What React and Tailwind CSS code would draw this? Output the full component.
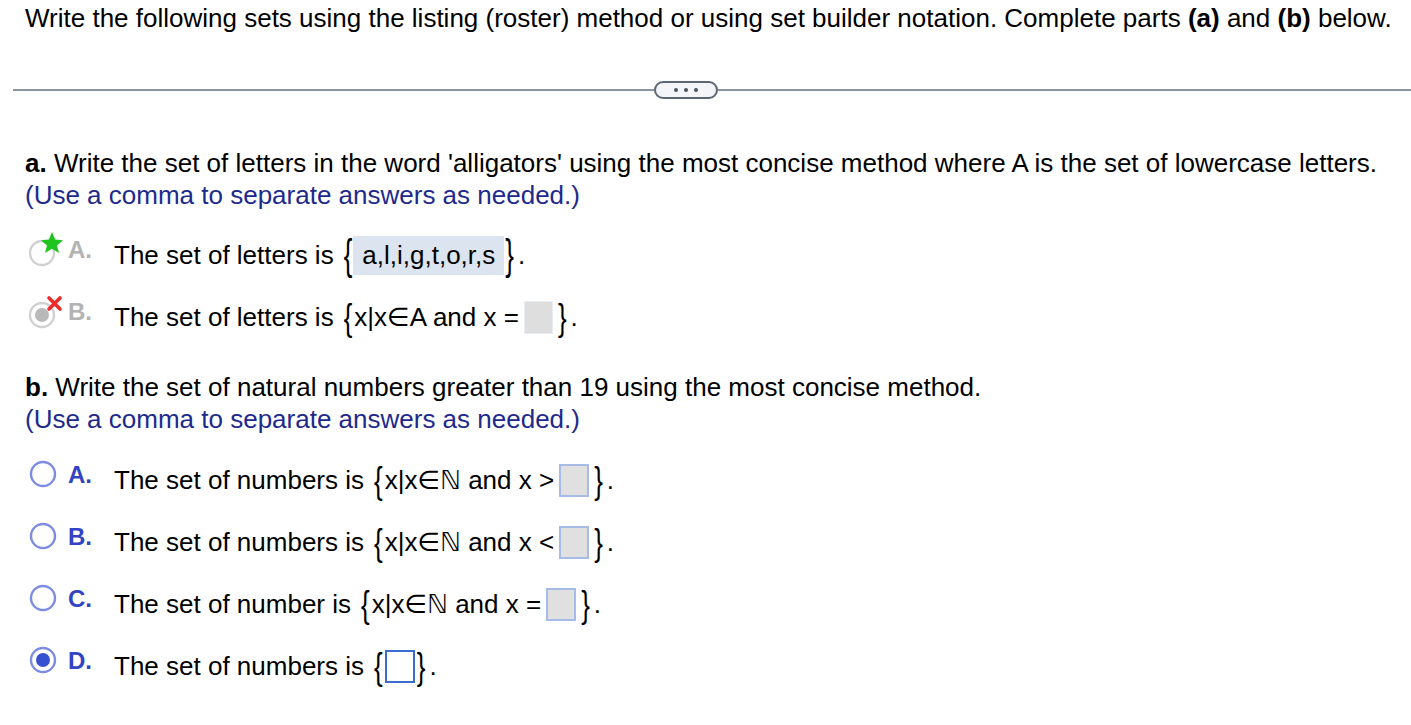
import React from "react";

const FONT = { fontFamily: '"Liberation Sans", Arial, "DejaVu Sans", sans-serif' };

// radio circle, plain or picked
const Radio = ({ on }) => (
  <svg width="30" height="30" viewBox="0 0 30 30" className="shrink-0">
    <circle cx="15" cy="15" r="12" fill="white" stroke="#7d8ce0" strokeWidth="2.4" />
    {on && <circle cx="15" cy="15" r="7" fill="#3550d0" />}
  </svg>
);

const GradedRight = () => (
  <svg width="40" height="38" viewBox="0 0 40 38" className="shrink-0">
    <circle cx="14" cy="23" r="12" fill="white" stroke="#d0d0d0" strokeWidth="2.4" />
    <polygon
      points="24,2 27.2,9.6 35,10.2 29,15.4 31,23 24,18.8 17,23 19,15.4 13,10.2 20.8,9.6"
      fill="#1fc41f"
    />
  </svg>
);

const GradedWrong = () => (
  <svg width="40" height="38" viewBox="0 0 40 38" className="shrink-0">
    <circle cx="14" cy="23" r="12" fill="white" stroke="#d0d0d0" strokeWidth="2.4" />
    <circle cx="14" cy="23" r="7" fill="#b9b9b9" />
    <path d="M21 6 L32 17 M32 6 L21 17" stroke="#ee2b2b" strokeWidth="3.6" strokeLinecap="round" />
  </svg>
);

const Brace = ({ children, tall }) => (
  <span
    className={`inline-block font-light text-[26px] leading-none ${tall ? "scale-y-[1.6]" : "scale-y-[1.45]"}`}
  >
    {children}
  </span>
);

const Box = ({ kind }) => {
  if (kind === "gray")
    return <span className="inline-block w-[29px] h-[33px] bg-[#dedede] border border-[#e8edf3] mx-[5px]" />;
  if (kind === "white")
    return <span className="inline-block w-[30px] h-[33px] bg-white border-2 border-[#3a6dd2] mx-[2px]" />;
  return <span className="inline-block w-[30px] h-[33px] bg-[#e0e0e0] border-2 border-[#a6bbe6] mx-[5px]" />;
};

const Option = ({ icon, label, gray, children }) => (
  <div className="flex items-center h-[62px]">
    <div className="w-[43px] flex justify-start pl-[3px] pb-[12px]">{icon}</div>
    <div
      className={`w-[46px] font-bold text-[24px] pb-[10px] ${gray ? "text-[#b3b3b3]" : "text-[#3343c4]"}`}
    >
      {label}
    </div>
    <div className="flex items-center text-[26px] text-black">{children}</div>
  </div>
);

const SetOf = ({ rel, box, after = "N" }) => (
  <span className="flex items-center ml-[10px]">
    <Brace>{"{"}</Brace>
    <span className="ml-[2px]">
      x|x∈{after === "N" ? "ℕ" : "A"} and x {rel}
    </span>
    <Box kind={box} />
    <Brace>{"}"}</Brace>
    <span className="ml-[4px]">.</span>
  </span>
);

export default function App() {
  return (
    <div className="bg-white min-h-[725px] px-[25px] leading-[32px]" style={FONT}>
      <div className="pt-[2px] text-[26px] text-black whitespace-nowrap">
        Write the following sets using the listing (roster) method or using set builder notation. Complete parts{" "}
        <b>(a)</b> and <b>(b)</b> below.
      </div>

      {/* divider with the "more" pill */}
      <div className="flex items-center mt-[47px] -ml-[12px] -mr-[25px]">
        <div className="w-[641px] h-[2px] bg-[#8b95a1]" />
        <button className="w-[64px] h-[18px] rounded-full border-2 border-[#5b6774] bg-[#f3f5f8] flex items-center justify-center gap-[6px]">
          <span className="w-[4px] h-[4px] rounded-full bg-[#4a5563]" />
          <span className="w-[4px] h-[4px] rounded-full bg-[#4a5563]" />
          <span className="w-[4px] h-[4px] rounded-full bg-[#4a5563]" />
        </button>
        <div className="flex-1 h-[2px] bg-[#8b95a1]" />
      </div>

      {/* part a */}
      <div className="mt-[48px] text-[26px]">
        <div className="text-black">
          <b>a.</b> Write the set of letters in the word 'alligators' using the most concise method where A is the set of
          lowercase letters.
        </div>
        <div className="text-[#1d2a8c]">(Use a comma to separate answers as needed.)</div>
      </div>

      <div className="mt-[13px]">
        <Option icon={<GradedRight />} label="A." gray>
          The set of letters is
          <span className="flex items-center ml-[10px]">
            <Brace tall>{"{"}</Brace>
            <span className="bg-[#dce4f0] px-[9px] h-[39px] flex items-center mx-[1px]">a,l,i,g,t,o,r,s</span>
            <Brace tall>{"}"}</Brace>
            <span className="ml-[4px]">.</span>
          </span>
        </Option>
        <Option icon={<GradedWrong />} label="B." gray>
          The set of letters is
          <SetOf rel="=" box="gray" after="A" />
        </Option>
      </div>

      {/* part b */}
      <div className="mt-[23px] text-[26px]">
        <div className="text-black">
          <b>b.</b> Write the set of natural numbers greater than 19 using the most concise method.
        </div>
        <div className="text-[#1d2a8c]">(Use a comma to separate answers as needed.)</div>
      </div>

      <div className="mt-[14px]">
        <Option icon={<Radio />} label="A.">
          The set of numbers is
          <SetOf rel=">" />
        </Option>
        <Option icon={<Radio />} label="B.">
          The set of numbers is
          <SetOf rel="<" />
        </Option>
        <Option icon={<Radio />} label="C.">
          The set of number is
          <SetOf rel="=" />
        </Option>
        <Option icon={<Radio on />} label="D.">
          The set of numbers is
          <span className="flex items-center ml-[10px]">
            <Brace>{"{"}</Brace>
            <Box kind="white" />
            <Brace>{"}"}</Brace>
            <span className="ml-[4px]">.</span>
          </span>
        </Option>
      </div>
    </div>
  );
}
